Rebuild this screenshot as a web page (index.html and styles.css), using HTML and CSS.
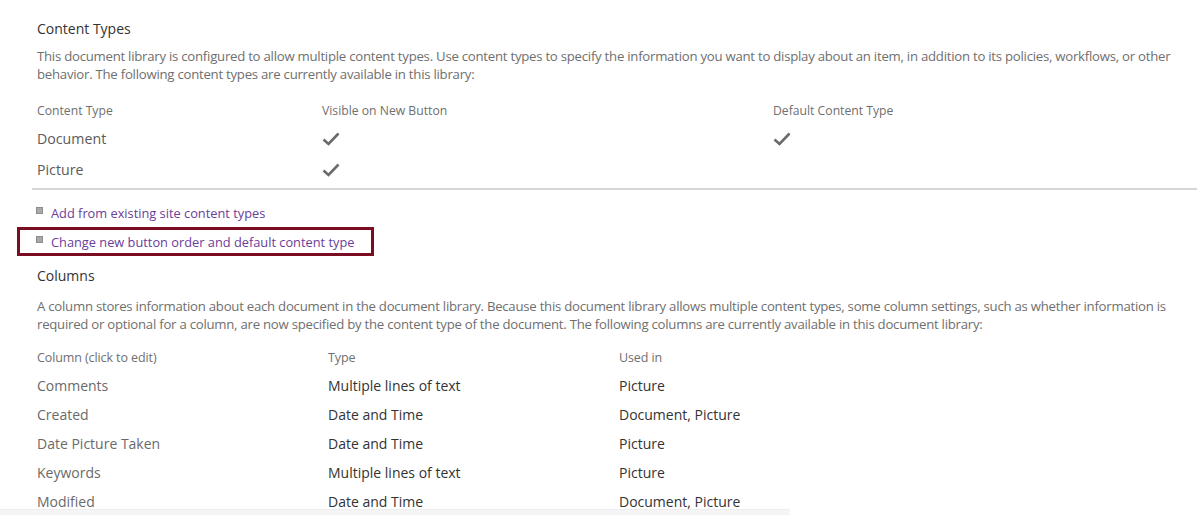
FILE: index.html
```html
<!DOCTYPE html>
<html lang="en">
<head>
  <meta charset="UTF-8">
  <title>Document Library Settings</title>
  <link rel="stylesheet" href="styles.css">
</head>
<body>

  <div class="section">
    <div class="title">Content Types</div>
    <p class="desc">This document library is configured to allow multiple content types. Use content types to specify the information you want to display about an item, in addition to its policies, workflows, or other behavior. The following content types are currently available in this library:</p>

    <table class="ct-table">
      <tr class="head">
        <th class="c1">Content Type</th>
        <th class="c2">Visible on New Button</th>
        <th>Default Content Type</th>
      </tr>
      <tr>
        <td>Document</td>
        <td><span class="check"><svg width="18" height="14" viewBox="0 0 18 14"><path d="M1.5 7.5 L6.5 12 L16.5 1.5" fill="none" stroke="#6b6b6b" stroke-width="2.6"/></svg></span></td>
        <td><span class="check"><svg width="18" height="14" viewBox="0 0 18 14"><path d="M1.5 7.5 L6.5 12 L16.5 1.5" fill="none" stroke="#6b6b6b" stroke-width="2.6"/></svg></span></td>
      </tr>
      <tr>
        <td>Picture</td>
        <td><span class="check"><svg width="18" height="14" viewBox="0 0 18 14"><path d="M1.5 7.5 L6.5 12 L16.5 1.5" fill="none" stroke="#6b6b6b" stroke-width="2.6"/></svg></span></td>
        <td></td>
      </tr>
    </table>
  </div>

  <hr class="divider">

  <ul class="links">
    <li><span class="bullet"></span><a href="#">Add from existing site content types</a></li>
    <li class="boxed"><span class="bullet"></span><a href="#">Change new button order and default content type</a></li>
  </ul>

  <div class="section columns">
    <div class="title">Columns</div>
    <p class="desc">A column stores information about each document in the document library. Because this document library allows multiple content types, some column settings, such as whether information is required or optional for a column, are now specified by the content type of the document. The following columns are currently available in this document library:</p>

    <table class="col-table">
      <tr class="head">
        <th class="k1">Column (click to edit)</th>
        <th class="k2">Type</th>
        <th>Used in</th>
      </tr>
      <tr><td class="name">Comments</td><td>Multiple lines of text</td><td>Picture</td></tr>
      <tr><td class="name">Created</td><td>Date and Time</td><td>Document, Picture</td></tr>
      <tr><td class="name">Date Picture Taken</td><td>Date and Time</td><td>Picture</td></tr>
      <tr><td class="name">Keywords</td><td>Multiple lines of text</td><td>Picture</td></tr>
      <tr><td class="name">Modified</td><td>Date and Time</td><td>Document, Picture</td></tr>
    </table>
  </div>

  <div class="bottom-band"></div>

</body>
</html>
```

FILE: styles.css
```css
body {
  font-family: "Open Sans", "Noto Sans", sans-serif;
  background: #ffffff;
  margin: 0;
  padding: 0;
  color: #444;
  height: 515px;
  overflow: hidden;
  position: relative;
}

.section {
  padding-left: 37px;
}

.title {
  font-size: 14px;
  color: #333;
  padding-top: 19px;
  line-height: 20px;
}

.desc {
  font-size: 13.2px;
  letter-spacing: -0.25px;
  color: #6f6f6f;
  line-height: 17.5px;
  margin: 9px 0 0 0;
  padding-right: 0;
}

table {
  border-collapse: collapse;
}

.ct-table {
  margin-top: 14px;
  width: 900px;
}

.ct-table th {
  font-weight: normal;
  font-size: 12.2px;
  color: #6f6f6f;
  text-align: left;
  padding: 0;
  height: 26px;
}

.ct-table .c1 {
  width: 285px;
}

.ct-table .c2 {
  width: 451px;
}

.ct-table td {
  font-size: 14.2px;
  color: #5a5a5a;
  padding: 0;
  height: 31px;
  vertical-align: middle;
}

.check {
  display: inline-block;
  padding-top: 4px;
}

.divider {
  border: none;
  border-top: 2px solid #d6d6d6;
  margin: 3px 3px 0 32px;
}

.links {
  list-style: none;
  margin: 8px 0 0 0;
  padding: 0 0 0 17px;
}

.links li {
  display: flex;
  align-items: center;
  box-sizing: border-box;
  width: 357px;
  height: 29px;
  padding-left: 16px;
  border: 3px solid transparent;
}

.links li.boxed {
  border-color: #7b0d22;
}

.bullet {
  width: 5px;
  height: 5px;
  background: #a9a9a9;
  border: 1px solid #8c8c8c;
  margin-right: 8px;
  margin-top: -4px;
}

.links a {
  color: #6a3d9a;
  font-size: 12.8px;
  text-decoration: none;
}

.columns .title {
  padding-top: 10px;
}

.columns .desc {
  font-size: 13.2px;
  letter-spacing: -0.25px;
  margin-top: 12px;
  padding-right: 10px;
}

.col-table {
  margin-top: 11px;
}

.col-table th {
  font-weight: normal;
  font-size: 12.5px;
  letter-spacing: -0.1px;
  color: #6f6f6f;
  text-align: left;
  padding: 0;
  height: 27px;
}

.col-table .k1 {
  width: 291px;
}

.col-table .k2 {
  width: 291px;
}

.col-table td {
  font-size: 14px;
  color: #333;
  padding: 0;
  height: 29px;
}

.col-table td.name {
  color: #6a6a6a;
}

.bottom-band {
  position: absolute;
  left: 0;
  bottom: 0;
  width: 790px;
  height: 5px;
  background: #f5f5f5;
  border-top: 1px solid #eeeeee;
}
```
